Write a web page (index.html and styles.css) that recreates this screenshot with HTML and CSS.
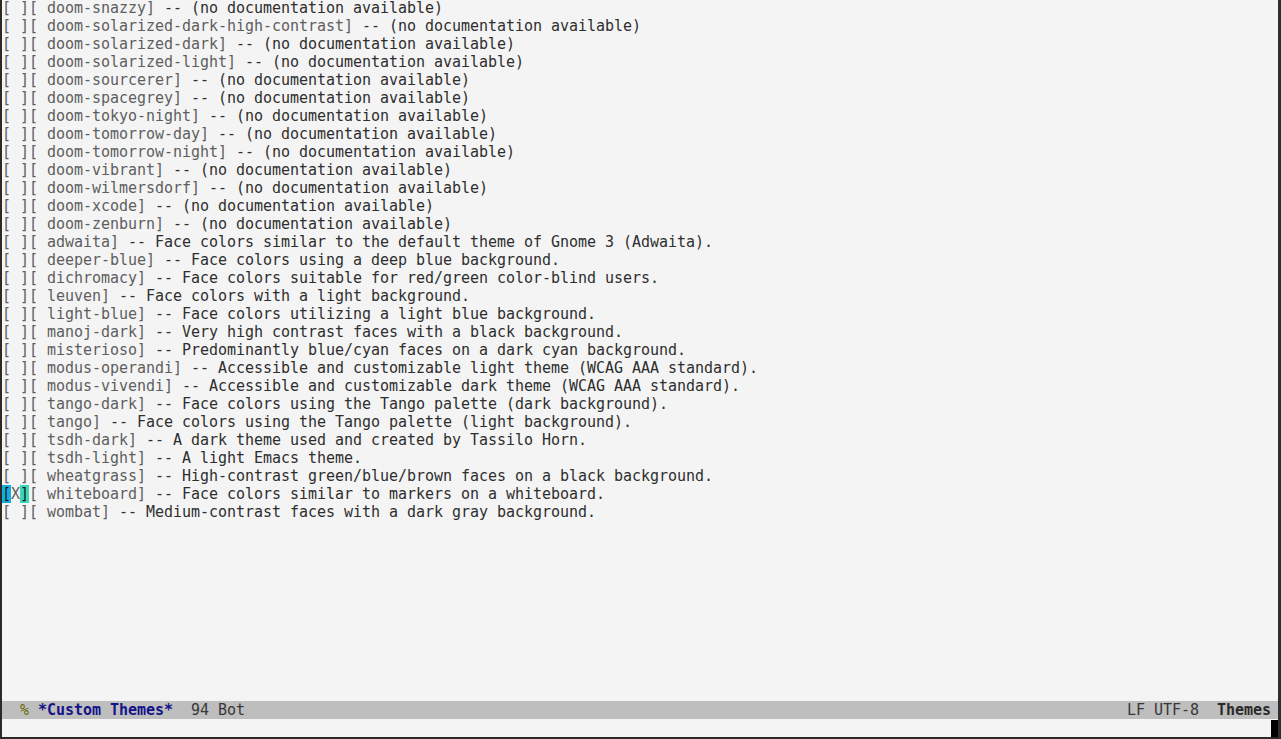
FILE: index.html
```html
<!DOCTYPE html>
<html>
<head>
<meta charset="utf-8">
<link rel="stylesheet" href="styles.css">
</head>
<body>
<div class="frame">
  <div class="buffer">
<div class="line"><span class="w">[ ]</span><span class="w">[ doom-snazzy]</span> -- (no documentation available)</div>
<div class="line"><span class="w">[ ]</span><span class="w">[ doom-solarized-dark-high-contrast]</span> -- (no documentation available)</div>
<div class="line"><span class="w">[ ]</span><span class="w">[ doom-solarized-dark]</span> -- (no documentation available)</div>
<div class="line"><span class="w">[ ]</span><span class="w">[ doom-solarized-light]</span> -- (no documentation available)</div>
<div class="line"><span class="w">[ ]</span><span class="w">[ doom-sourcerer]</span> -- (no documentation available)</div>
<div class="line"><span class="w">[ ]</span><span class="w">[ doom-spacegrey]</span> -- (no documentation available)</div>
<div class="line"><span class="w">[ ]</span><span class="w">[ doom-tokyo-night]</span> -- (no documentation available)</div>
<div class="line"><span class="w">[ ]</span><span class="w">[ doom-tomorrow-day]</span> -- (no documentation available)</div>
<div class="line"><span class="w">[ ]</span><span class="w">[ doom-tomorrow-night]</span> -- (no documentation available)</div>
<div class="line"><span class="w">[ ]</span><span class="w">[ doom-vibrant]</span> -- (no documentation available)</div>
<div class="line"><span class="w">[ ]</span><span class="w">[ doom-wilmersdorf]</span> -- (no documentation available)</div>
<div class="line"><span class="w">[ ]</span><span class="w">[ doom-xcode]</span> -- (no documentation available)</div>
<div class="line"><span class="w">[ ]</span><span class="w">[ doom-zenburn]</span> -- (no documentation available)</div>
<div class="line"><span class="w">[ ]</span><span class="w">[ adwaita]</span> -- Face colors similar to the default theme of Gnome 3 (Adwaita).</div>
<div class="line"><span class="w">[ ]</span><span class="w">[ deeper-blue]</span> -- Face colors using a deep blue background.</div>
<div class="line"><span class="w">[ ]</span><span class="w">[ dichromacy]</span> -- Face colors suitable for red/green color-blind users.</div>
<div class="line"><span class="w">[ ]</span><span class="w">[ leuven]</span> -- Face colors with a light background.</div>
<div class="line"><span class="w">[ ]</span><span class="w">[ light-blue]</span> -- Face colors utilizing a light blue background.</div>
<div class="line"><span class="w">[ ]</span><span class="w">[ manoj-dark]</span> -- Very high contrast faces with a black background.</div>
<div class="line"><span class="w">[ ]</span><span class="w">[ misterioso]</span> -- Predominantly blue/cyan faces on a dark cyan background.</div>
<div class="line"><span class="w">[ ]</span><span class="w">[ modus-operandi]</span> -- Accessible and customizable light theme (WCAG AAA standard).</div>
<div class="line"><span class="w">[ ]</span><span class="w">[ modus-vivendi]</span> -- Accessible and customizable dark theme (WCAG AAA standard).</div>
<div class="line"><span class="w">[ ]</span><span class="w">[ tango-dark]</span> -- Face colors using the Tango palette (dark background).</div>
<div class="line"><span class="w">[ ]</span><span class="w">[ tango]</span> -- Face colors using the Tango palette (light background).</div>
<div class="line"><span class="w">[ ]</span><span class="w">[ tsdh-dark]</span> -- A dark theme used and created by Tassilo Horn.</div>
<div class="line"><span class="w">[ ]</span><span class="w">[ tsdh-light]</span> -- A light Emacs theme.</div>
<div class="line"><span class="w">[ ]</span><span class="w">[ wheatgrass]</span> -- High-contrast green/blue/brown faces on a black background.</div>
<div class="line"><span class="cur">[</span><span class="w">X</span><span class="paren">]</span><span class="w">[ whiteboard]</span> -- Face colors similar to markers on a whiteboard.</div>
<div class="line"><span class="w">[ ]</span><span class="w">[ wombat]</span> -- Medium-contrast faces with a dark gray background.</div>
  </div>
  <div class="modeline"><span class="ml-left">  <span class="pct">%</span> <span class="bufname">*Custom Themes*</span>  94 Bot</span><span class="ml-right">LF UTF-8  <b class="mode">Themes</b></span></div>
  <div class="minibuffer"><span class="mcursor"></span></div>
</div>
</body>
</html>
```

FILE: styles.css
```css
html, body {
  margin: 0;
  padding: 0;
  background: #f4f4f4;
}
.frame {
  width: 1281px;
  height: 739px;
  box-sizing: border-box;
  border-left: 2px solid #2a2a2a;
  border-right: 3px solid #2f2f2f;
  border-bottom: 2px solid #2a2a2a;
  background: #f4f4f4;
  display: flex;
  flex-direction: column;
  font-family: "DejaVu Sans Mono", monospace;
  font-size: 15px;
  line-height: 18px;
  letter-spacing: -0.03px;
  color: #2e2e2e;
  overflow: hidden;
}
.buffer {
  flex: 1;
  min-height: 0;
  overflow: hidden;
  margin-top: -1px;
}
.line {
  height: 18px;
  white-space: pre;
}
.w {
  color: #5e5e5e;
}
.cur {
  background: #12aee0;
  color: #1c1c1c;
}
.paren {
  background: #3cd6b8;
  color: #1c1c1c;
}
.modeline {
  height: 18px;
  flex: none;
  background: #bebebe;
  color: #383838;
  white-space: pre;
  display: flex;
  justify-content: space-between;
  padding-right: 7px;
}
.pct {
  color: #6b6b10;
}
.bufname {
  color: #13138a;
  font-weight: bold;
}
.mode {
  color: #2a2a2a;
  font-weight: bold;
}
.minibuffer {
  height: 18px;
  flex: none;
  display: flex;
  justify-content: flex-end;
}
.mcursor {
  width: 7px;
  height: 17px;
  margin-top: 1px;
  background: #000;
}
```
